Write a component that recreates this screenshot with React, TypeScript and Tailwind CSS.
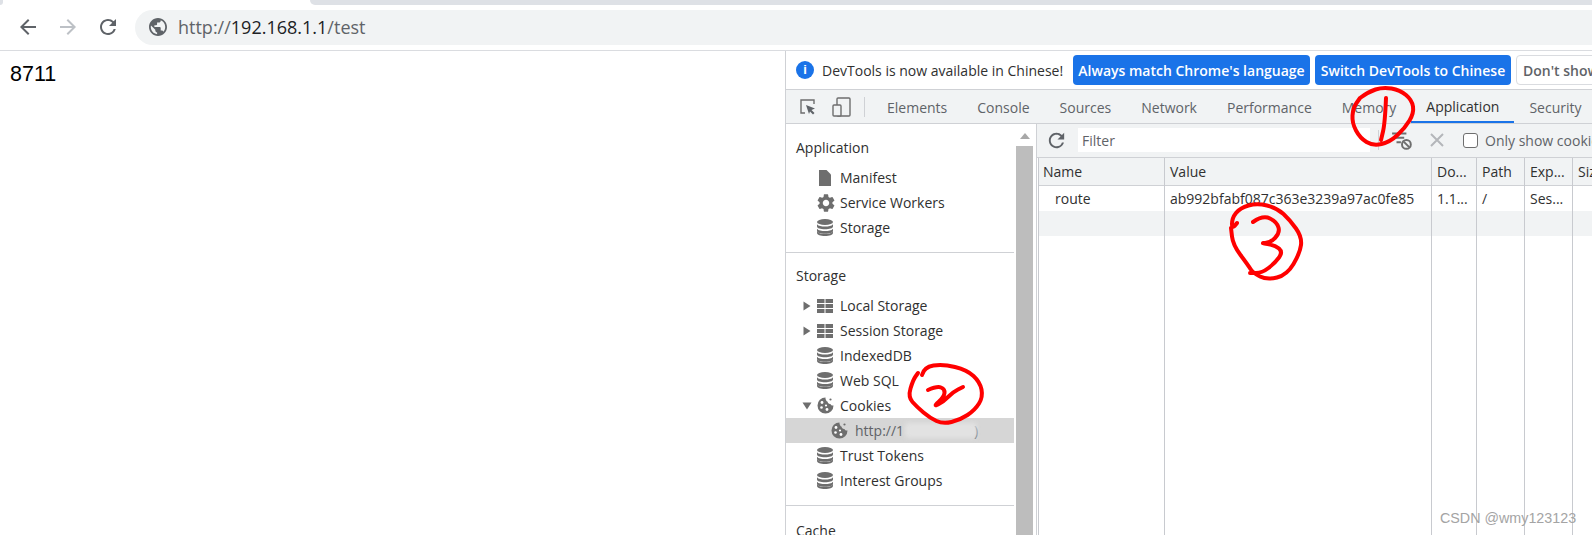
import React from "react";

const font = "font-['Open_Sans',sans-serif]";

const smooth = (pts: number[][]) => {
  let d = `M${pts[0][0]} ${pts[0][1]}`;
  for (let i = 1; i < pts.length - 1; i++) {
    const mx = (pts[i][0] + pts[i + 1][0]) / 2;
    const my = (pts[i][1] + pts[i + 1][1]) / 2;
    d += ` Q${pts[i][0]} ${pts[i][1]} ${mx} ${my}`;
  }
  const last = pts[pts.length - 1];
  return d + ` L${last[0]} ${last[1]}`;
};

const scribbles: number[][][] = [
  [[1360, 98], [1368, 92], [1383, 87], [1400, 90], [1412, 100], [1414, 113], [1405, 128], [1390, 142], [1373, 146], [1360, 138], [1352, 123], [1353, 108], [1360, 98]],
  [[1386, 98], [1385, 123], [1381, 140]],
  [[922, 375], [924, 367], [943, 364], [967, 370], [980, 382], [983, 397], [975, 410], [960, 420], [943, 424], [930, 418], [917, 407], [908, 397], [913, 380], [918, 373]],
  [[928, 390], [937, 386], [945, 389], [944, 397], [933, 407], [943, 402], [953, 392], [963, 387]],
  [[1237, 223], [1232, 230], [1232, 218], [1240, 208], [1257, 203], [1277, 208], [1290, 220], [1302, 237], [1300, 253], [1287, 275], [1267, 280], [1253, 273], [1248, 265], [1233, 245], [1231, 228]],
  [[1253, 222], [1263, 215], [1277, 222], [1280, 233], [1270, 243], [1260, 243], [1275, 245], [1283, 252], [1275, 263], [1262, 273], [1250, 273]],
];

const Arrow = ({ flip, color }: { flip?: boolean; color: string }) => (
  <svg width="24" height="24" viewBox="0 0 24 24" fill={color} className={flip ? "rotate-180" : ""}>
    <path d="M20 11H7.83l5.59-5.59L12 4l-8 8 8 8 1.41-1.41L7.83 13H20v-2z" />
  </svg>
);

const Reload = ({ size, color }: { size: number; color: string }) => (
  <svg width={size} height={size} viewBox="0 0 24 24" fill={color}>
    <path d="M17.65 6.35A7.958 7.958 0 0012 4c-4.42 0-7.99 3.58-7.99 8s3.57 8 7.99 8c3.73 0 6.84-2.55 7.73-6h-2.08A5.99 5.99 0 0112 18c-3.31 0-6-2.69-6-6s2.69-6 6-6c1.66 0 3.14.69 4.22 1.78L13 11h7V4l-2.35 2.35z" />
  </svg>
);

const Globe = () => (
  <svg width="18" height="18" viewBox="2 2 20 20" fill="#5f6368">
    <path d="M12 2C6.48 2 2 6.48 2 12s4.48 10 10 10 10-4.48 10-10S17.52 2 12 2zm-1 17.93c-3.95-.49-7-3.85-7-7.93 0-.62.08-1.21.21-1.79L9 15v1c0 1.1.9 2 2 2v1.93zm6.9-2.54c-.26-.81-1-1.39-1.9-1.39h-1v-3c0-.55-.45-1-1-1H8v-2h2c.55 0 1-.45 1-1V7h2c1.1 0 2-.9 2-2v-.41c2.93 1.19 5 4.06 5 7.41 0 2.08-.8 3.97-2.1 5.39z" />
  </svg>
);

const FileIcon = () => (
  <svg width="16" height="18" viewBox="0 0 16 18" fill="#6e6e6e">
    <path d="M2 1h7.5L14 5.5V17H2z" />
  </svg>
);

const Gear = () => (
  <svg width="18" height="18" viewBox="2 2 20 20" fill="#6e6e6e">
    <path d="M19.14 12.94c.04-.3.06-.61.06-.94 0-.32-.02-.64-.07-.94l2.03-1.58a.49.49 0 00.12-.61l-1.92-3.32a.488.488 0 00-.59-.22l-2.39.96c-.5-.38-1.03-.7-1.62-.94l-.36-2.54a.484.484 0 00-.48-.41h-3.84c-.24 0-.43.17-.47.41l-.36 2.54c-.59.24-1.13.57-1.62.94l-2.39-.96c-.22-.08-.47 0-.59.22L2.74 8.87c-.12.21-.08.47.12.61l2.03 1.58c-.05.3-.09.63-.09.94s.02.64.07.94l-2.03 1.58a.49.49 0 00-.12.61l1.92 3.32c.12.22.37.29.59.22l2.39-.96c.5.38 1.03.7 1.62.94l.36 2.54c.05.24.24.41.48.41h3.84c.24 0 .44-.17.47-.41l.36-2.54c.59-.24 1.13-.56 1.62-.94l2.39.96c.22.08.47 0 .59-.22l1.92-3.32c.12-.22.07-.47-.12-.61l-2.01-1.58zM12 15.6c-1.98 0-3.6-1.62-3.6-3.6s1.62-3.6 3.6-3.6 3.6 1.62 3.6 3.6-1.62 3.6-3.6 3.6z" />
  </svg>
);

const Db = () => (
  <svg width="16" height="17" viewBox="0 0 16 17" fill="#6e6e6e">
    <ellipse cx="8" cy="3" rx="8" ry="3" />
    <path d="M0 5.2C1.5 7 4.5 7.6 8 7.6s6.500-.6 8-2.400V7.500C16 9.200 12.400 10.300 8 10.300S0 9.200 0 7.500z" />
    <path d="M0 9.700C1.500 11.500 4.500 12.100 8 12.100s6.500-.6 8-2.400V12C16 13.700 12.400 14.800 8 14.800S0 13.700 0 12z" />
    <path d="M0 12.600C1.500 14.400 4.500 15 8 15s6.500-.6 8-2.400V14C16 15.700 12.400 17 8 17S0 15.700 0 14z" />
  </svg>
);

const TableIcon = () => (
  <svg width="16" height="14" viewBox="0 0 16 14" fill="#6e6e6e">
    <rect x="0" y="0" width="7.500" height="4" />
    <rect x="8.500" y="0" width="7.500" height="4" />
    <rect x="0" y="5" width="7.500" height="4" />
    <rect x="8.500" y="5" width="7.500" height="4" />
    <rect x="0" y="10" width="7.500" height="4" />
    <rect x="8.500" y="10" width="7.500" height="4" />
  </svg>
);

const Cookie = () => (
  <svg width="17" height="17" viewBox="0 0 17 17">
    <path fill="#6e6e6e" d="M8.500 0.500a8 8 0 108 8c-1.400.3-2.600-.4-3-1.600-1.500.3-2.800-.8-2.800-2.200C9.300 4.600 8.200 2 8.500.5z" />
    <circle cx="5" cy="5.500" r="1.400" fill="#fff" />
    <circle cx="4.500" cy="10.500" r="1.300" fill="#fff" />
    <circle cx="9" cy="8.500" r="1.100" fill="#fff" />
    <circle cx="10" cy="12.500" r="1.400" fill="#fff" />
    <circle cx="13.500" cy="2.500" r="1.100" fill="#6e6e6e" />
  </svg>
);

const Tri = ({ down }: { down?: boolean }) => (
  <svg width="8" height="10" viewBox="0 0 8 10" fill="#6e6e6e" className={down ? "rotate-90" : ""}>
    <path d="M0.500 0.500 7.500 5 0.500 9.500z" />
  </svg>
);

const Row = ({ icon, label, arrow, down }: { icon: React.ReactNode; label: string; arrow?: boolean; down?: boolean }) => (
  <div className="flex h-[25px] items-center pl-[17px] text-[14px] text-[#303030]">
    <span className="flex w-[14px] shrink-0 items-center">{arrow && <Tri down={down} />}</span>
    <span className="flex w-[23px] shrink-0 items-center">{icon}</span>
    {label}
  </div>
);

const tabs = ["Elements", "Console", "Sources", "Network", "Performance", "Memory", "Application", "Security"];

const columns = [
  { name: "Name", w: "w-[127px]", cell: "route", headCls: "pl-[4px]", cellCls: "pl-[16px]" },
  { name: "Value", w: "w-[267px]", cell: "ab992bfabf087c363e3239a97ac0fe85", headCls: "pl-[5px]", cellCls: "pl-[5px]" },
  { name: "Do...", w: "w-[45px]", cell: "1.1...", headCls: "pl-[5px]", cellCls: "pl-[5px]" },
  { name: "Path", w: "w-[48px]", cell: "/", headCls: "pl-[5px]", cellCls: "pl-[5px]" },
  { name: "Exp...", w: "w-[48px]", cell: "Ses...", headCls: "pl-[5px]", cellCls: "pl-[5px]" },
  { name: "Size", w: "w-[40px]", cell: "", headCls: "pl-[5px]", cellCls: "pl-[5px]" },
];

export default function App() {
  return (
    <div className={`relative flex h-[535px] w-[1592px] flex-col overflow-hidden bg-white ${font}`}>
      {/* tab strip */}
      <div className="flex h-[5px] shrink-0">
        <div className="h-[5px] w-[3px] rounded-br-[3px] bg-[#dee1e6]" />
        <div className="ml-[307px] h-[5px] flex-1 rounded-bl-[5px] bg-[#dee1e6]" />
      </div>

      {/* browser toolbar */}
      <div className="flex h-[46px] shrink-0 items-center border-b border-[#dadce0] pb-[1px] pl-[16px]">
        <div className="flex w-[40px]"><Arrow color="#5f6368" /></div>
        <div className="flex w-[40px]"><Arrow flip color="#bdc1c6" /></div>
        <div className="flex w-[39px]"><Reload size={24} color="#5f6368" /></div>
        <div className="flex h-[35px] flex-1 items-center gap-[11px] rounded-l-full bg-[#f1f3f4] pl-[14px] text-[18px]">
          <Globe />
          <span className="text-[#5f6368]">
            http://<span className="text-[#202124]">192.168.1.1</span>/test
          </span>
        </div>
      </div>

      <div className="flex min-h-0 flex-1">
        {/* page */}
        <div className="w-[785px] shrink-0 pl-[10px] pt-[10px] font-['Liberation_Sans',sans-serif] text-[21.5px] leading-[26px] text-black">
          8711
        </div>

        {/* devtools */}
        <div className="flex min-w-0 flex-1 flex-col border-l border-[#cfd1d5]">
          <div className="flex h-[38px] shrink-0 items-center whitespace-nowrap pl-[10px] text-[14px] text-[#303030]">
            <span className="mr-[8px] flex h-[18px] w-[18px] shrink-0 items-center justify-center rounded-full bg-[#1a73e8] font-['Liberation_Sans',sans-serif] text-[13px] font-bold text-white">
              i
            </span>
            <span className="w-[251px] shrink-0">DevTools is now available in Chinese!</span>
            <span className="flex h-[30px] w-[237px] shrink-0 items-center justify-center rounded-[4px] bg-[#1a73e8] text-[14px] font-semibold text-white">
              Always match Chrome's language
            </span>
            <span className="ml-[5px] flex h-[30px] w-[196px] shrink-0 items-center justify-center rounded-[4px] bg-[#1a73e8] text-[14px] font-semibold text-white">
              Switch DevTools to Chinese
            </span>
            <span className="ml-[5px] flex h-[30px] w-[100px] shrink-0 items-center rounded-[4px] border border-[#dadce0] pl-[6px] text-[14px] font-semibold text-[#5f6368]">
              Don't show
            </span>
          </div>

          {/* tabs */}
          <div className="flex h-[35px] shrink-0 items-center border-y border-[#cfd1d5] bg-[#f1f3f4] pl-[13px] text-[14px] text-[#5f6368]">
            <svg width="17" height="17" viewBox="0 0 17 17" fill="none" className="shrink-0">
              <path d="M6 15H2V2h13v4" stroke="#6e6e6e" strokeWidth="1.400" />
              <path d="M7 7l9 3.500-3.500 1.500 3 3-1.500 1.500-3-3L10 16z" fill="#5f6368" />
            </svg>
            <svg width="19" height="20" viewBox="0 0 19 20" fill="none" className="ml-[16px] shrink-0">
              <rect x="5" y="1" width="13" height="18" rx="1" stroke="#6e6e6e" strokeWidth="1.400" />
              <rect x="1" y="8" width="8" height="11" rx="1" fill="#f1f3f4" stroke="#6e6e6e" strokeWidth="1.400" />
            </svg>
            <div className="ml-[13px] mr-[7px] h-[20px] w-[1px] shrink-0 bg-[#cfd1d5]" />
            {tabs.map((t) => (
              <div
                key={t}
                className={
                  t === "Application"
                    ? "flex h-full shrink-0 items-center border-b-2 border-[#1a73e8] px-[15px] pt-[2px] text-[#303030]"
                    : "flex h-full shrink-0 items-center px-[15px] pt-[1px]"
                }
              >
                {t}
              </div>
            ))}
          </div>

          <div className="flex min-h-0 flex-1">
            {/* sidebar */}
            <div className="w-[228px] shrink-0 overflow-hidden">
              <div className="flex h-[129px] flex-col border-b border-[#cfd1d5] pt-[11px]">
                <div className="flex h-[25px] items-center pl-[10px] text-[14px] text-[#303030]">Application</div>
                <div className="mt-[5px]">
                  <Row icon={<FileIcon />} label="Manifest" />
                  <Row icon={<Gear />} label="Service Workers" />
                  <Row icon={<Db />} label="Storage" />
                </div>
              </div>
              <div className="flex h-[253px] flex-col border-b border-[#cfd1d5] pt-[10px]">
                <div className="flex h-[25px] items-center pl-[10px] text-[14px] text-[#303030]">Storage</div>
                <div className="mt-[5px]">
                  <Row arrow icon={<TableIcon />} label="Local Storage" />
                  <Row arrow icon={<TableIcon />} label="Session Storage" />
                  <Row icon={<Db />} label="IndexedDB" />
                  <Row icon={<Db />} label="Web SQL" />
                  <Row arrow down icon={<Cookie />} label="Cookies" />
                  <div className="flex h-[25px] items-center bg-[#d6d6d6] pl-[45px] text-[14px] text-[#5f6368]">
                    <span className="flex w-[24px] shrink-0 items-center"><Cookie /></span>
                    http://1
                    <span className="ml-[1px] h-[15px] w-[72px] rounded-[3px] bg-[#e2e2e2] blur-[2px]" />
                    <span className="ml-[-3px]">)</span>
                  </div>
                  <Row icon={<Db />} label="Trust Tokens" />
                  <Row icon={<Db />} label="Interest Groups" />
                </div>
              </div>
              <div className="flex h-[36px] items-center pl-[10px] pt-[12px] text-[14px] text-[#303030]">Cache</div>
            </div>

            {/* sidebar scrollbar */}
            <div className="flex w-[22px] shrink-0 flex-col pl-[2px] pr-[3px]">
              <div className="flex h-[22px] items-center justify-center pt-[1px]">
                <svg width="10" height="6" viewBox="0 0 10 6" fill="#a8a8a8"><path d="M5 0l5 6H0z" /></svg>
              </div>
              <div className="flex-1 bg-[#bdbdbd]" />
            </div>

            {/* cookies pane */}
            <div className="flex min-w-0 flex-1 flex-col border-l border-[#cfd1d5]">
              <div className="flex h-[34px] shrink-0 items-center border-b border-[#cfd1d5] bg-[#f1f3f4] pb-[1px] text-[14px] text-[#5f6368]">
                <div className="ml-[8px] flex w-[33px] shrink-0"><Reload size={23} color="#5f6368" /></div>
                <div className="flex h-[24px] w-[292px] shrink-0 items-center bg-white pl-[4px] text-[14px]">Filter</div>
                <div className="ml-[8px] h-[20px] w-[1px] shrink-0 bg-[#cfd1d5]" />
                <svg width="22" height="22" viewBox="0 0 20 20" fill="none" className="ml-[12px] shrink-0">
                  <path d="M1 4h13M3 8h9M5 12h4" stroke="#6e6e6e" strokeWidth="1.800" />
                  <circle cx="14" cy="14" r="4" stroke="#6e6e6e" strokeWidth="1.800" />
                  <path d="M11.500 11.500l5 5" stroke="#6e6e6e" strokeWidth="1.800" />
                </svg>
                <svg width="14" height="14" viewBox="0 0 14 14" className="ml-[17px] shrink-0">
                  <path d="M1 1l12 12M13 1L1 13" stroke="#b4b6ba" strokeWidth="2" />
                </svg>
                <span className="ml-[19px] h-[15px] w-[15px] shrink-0 rounded-[3px] border border-[#6e6e6e] bg-white" />
                <span className="ml-[7px] whitespace-nowrap">Only show cookies</span>
              </div>

              {/* table */}
              <div className="flex min-h-0 flex-1 pl-[1px] text-[14px] text-[#303030]">
                {columns.map((c, i) => (
                  <div key={c.name} className={`flex shrink-0 flex-col whitespace-nowrap overflow-hidden ${c.w} ${i < 5 ? "border-r border-[#c8cacf]" : ""} ${i === 0 ? "border-l border-[#c8cacf]" : ""}`}>
                    <div className={`flex h-[28px] shrink-0 items-center border-b border-[#cfd1d5] bg-[#f1f3f4] ${c.headCls}`}>{c.name}</div>
                    <div className={`flex h-[25px] shrink-0 items-center ${c.cellCls}`}>{c.cell}</div>
                    <div className="h-[25px] shrink-0 bg-[#f1f3f4]" />
                  </div>
                ))}
              </div>
            </div>
          </div>
        </div>
      </div>

      {/* hand drawn marks on the screenshot */}
      <svg width="1592" height="535" viewBox="0 0 1592 535" fill="none" className="pointer-events-none absolute left-0 top-0">
        {scribbles.map((pts, i) => (
          <path key={i} d={smooth(pts)} stroke="#ff0000" strokeWidth="4" strokeLinecap="round" strokeLinejoin="round" />
        ))}
      </svg>

      {/* watermark */}
      <div className="absolute left-[1440px] top-[508px] font-['Liberation_Sans',sans-serif] text-[14.3px] leading-[20px] text-[#a4a4a4]">
        CSDN @wmy123123
      </div>
    </div>
  );
}
